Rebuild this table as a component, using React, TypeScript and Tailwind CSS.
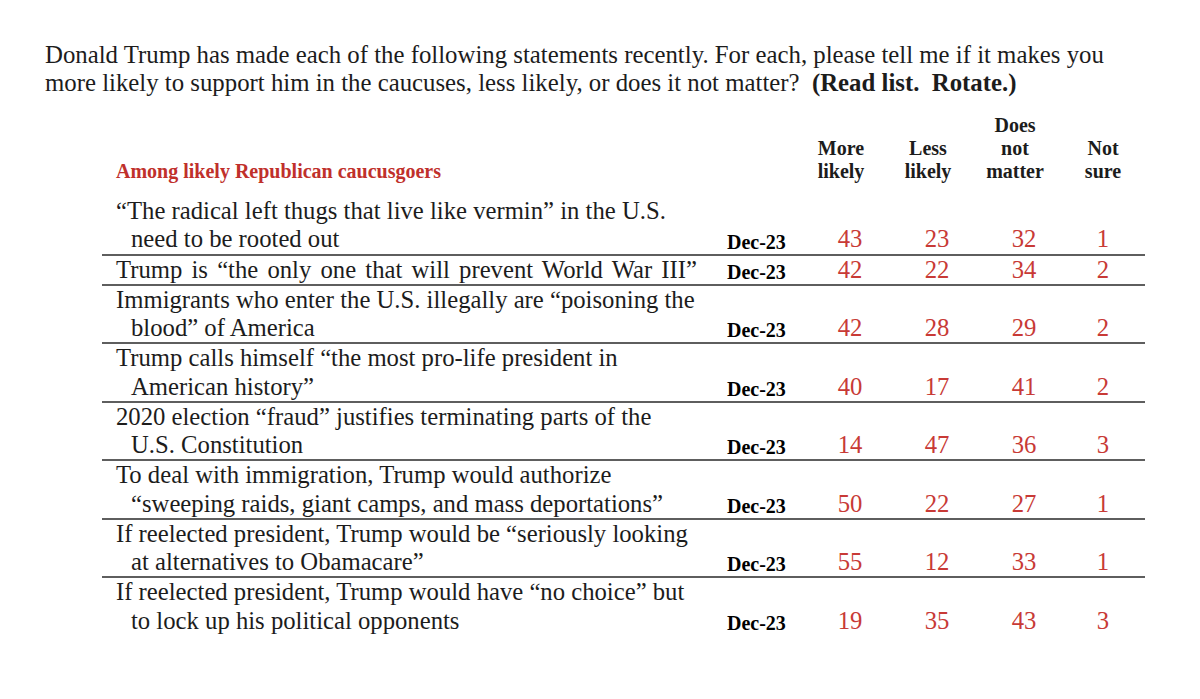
const rows = [
  { lines: ["“The radical left thugs that live like vermin” in the U.S.", "need to be rooted out"], vals: [43, 23, 32, 1] },
  { lines: ["Trump is “the only one that will prevent World War III”"], vals: [42, 22, 34, 2], wide: true },
  { lines: ["Immigrants who enter the U.S. illegally are “poisoning the", "blood” of America"], vals: [42, 28, 29, 2] },
  { lines: ["Trump calls himself “the most pro-life president in", "American history”"], vals: [40, 17, 41, 2] },
  { lines: ["2020 election “fraud” justifies terminating parts of the", "U.S. Constitution"], vals: [14, 47, 36, 3] },
  { lines: ["To deal with immigration, Trump would authorize", "“sweeping raids, giant camps, and mass deportations”"], vals: [50, 22, 27, 1] },
  { lines: ["If reelected president, Trump would be “seriously looking", "at alternatives to Obamacare”"], vals: [55, 12, 33, 1] },
  { lines: ["If reelected president, Trump would have “no choice” but", "to lock up his political opponents"], vals: [19, 35, 43, 3] },
];

const grid = "grid grid-cols-[625px_79px_88px_86px_88px_77px]";

export default function App() {
  return (
    <div className="min-h-screen w-[1200px] bg-white text-[#1c1c1c] font-['Liberation_Serif',serif]">
      {/* Question */}
      <div className="pl-[45px] pt-[41px] text-[24.8px] leading-[28px]">
        <div className="whitespace-nowrap">
          Donald Trump has made each of the following statements recently. For each, please tell me if it makes you
        </div>
        <div className="whitespace-pre">
          more likely to support him in the caucuses, less likely, or does it not matter?{"  "}
          <span className="font-bold">(Read list.  Rotate.)</span>
        </div>
      </div>

      {/* Table */}
      <div className="ml-[102px] mt-[17px] w-[1043px]">
        <div className={`${grid} items-end text-[20px] leading-[23px] font-bold`}>
          <div className="pl-[14px] text-[#c0302b]">Among likely Republican caucusgoers</div>
          <div />
          <div className="text-center pr-[18px]">More<br />likely</div>
          <div className="text-center pr-[18px]">Less<br />likely</div>
          <div className="text-center pr-[18px]">Does<br />not<br />matter</div>
          <div className="text-center pr-[7px]">Not<br />sure</div>
        </div>

        <div className="mt-[14px]">
          {rows.map((r, i) => (
            <div
              key={i}
              className={`${grid} items-end ${i < rows.length - 1 ? "border-b-2 border-[#5e5e5e]" : ""}`}
            >
              <div
                className={`pl-[29px] -indent-[15px] text-[24.7px] leading-[28.25px] whitespace-nowrap ${r.wide ? "[word-spacing:3px]" : ""}`}
              >
                {r.lines.map((l, j) => (
                  <span key={j}>
                    {l}
                    {j < r.lines.length - 1 && <br />}
                  </span>
                ))}
              </div>
              <div className="text-[20px] leading-[23px] font-bold text-black">Dec-23</div>
              {r.vals.map((v, k) => (
                <div
                  key={k}
                  className={`text-center text-[24.7px] leading-[28.25px] text-[#c83a36] ${k === 3 ? "pr-[7px]" : ""}`}
                >
                  {v}
                </div>
              ))}
            </div>
          ))}
        </div>
      </div>
    </div>
  );
}
